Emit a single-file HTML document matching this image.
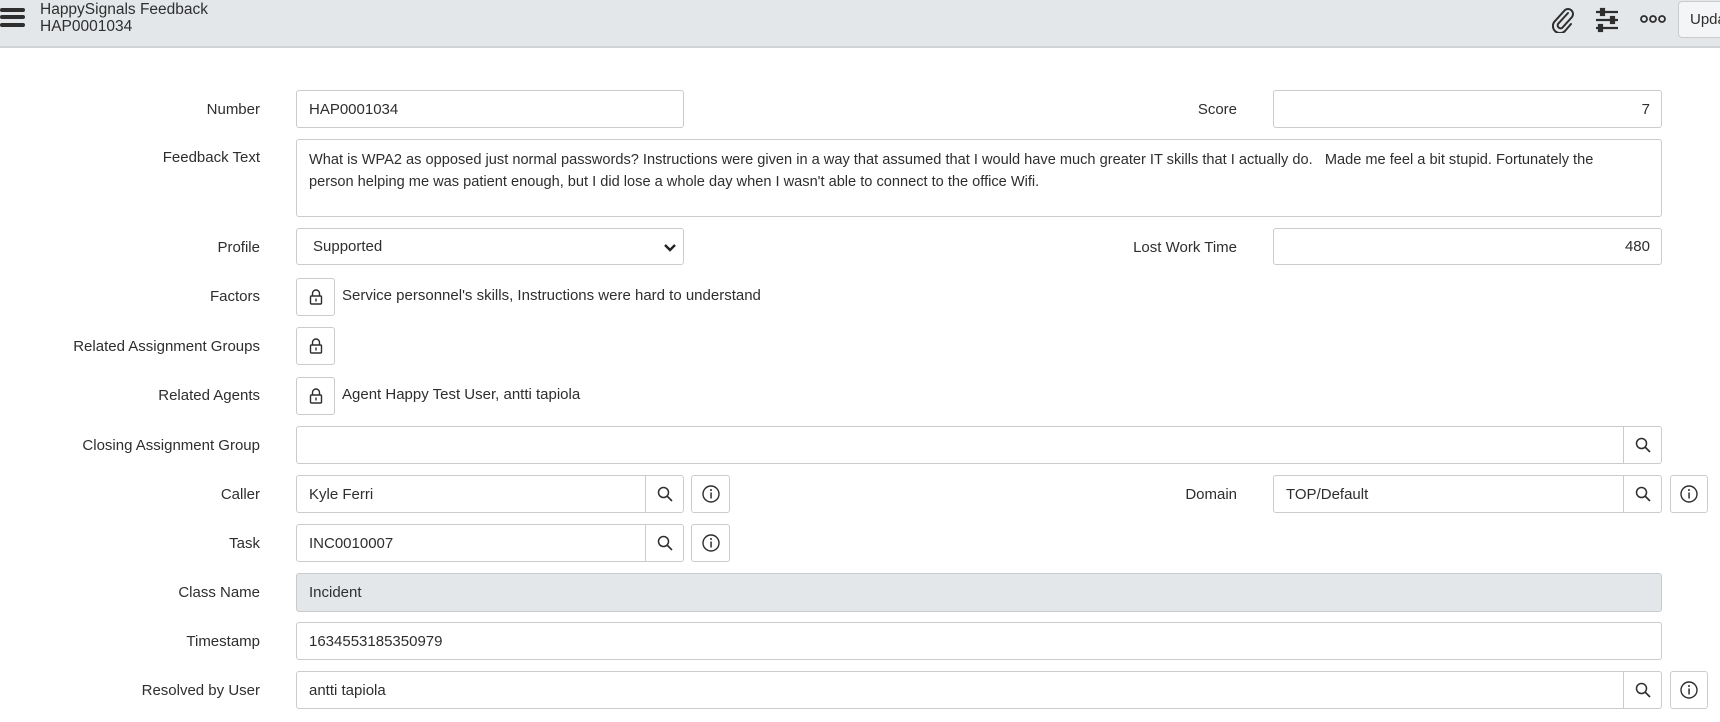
<!DOCTYPE html>
<html><head><meta charset="utf-8">
<style>
*{box-sizing:border-box;margin:0;padding:0}
body{width:1720px;height:722px;background:#fff;font-family:"Liberation Sans",sans-serif;color:#2e2e2e;font-size:15px;position:relative;overflow:hidden}
.hdr{position:absolute;left:0;top:0;width:1720px;height:48px;background:#e4e7ea;border-bottom:2px solid #d0d3d6}
.ham{position:absolute;left:0;width:25px;height:4px;background:#2e2e2e;border-radius:2px}
.t{position:absolute;left:40px;font-size:15.5px;color:#2e2e2e}
.lbl{position:absolute;text-align:right;font-size:15px;line-height:20px}
.box{position:absolute;border:1px solid #c9cbcd;border-radius:3px;background:#fff;font-size:15px;padding-left:12px;display:flex;align-items:center}
.r{justify-content:flex-end;padding-right:11px}
.btn{position:absolute;border:1px solid #c9cbcd;border-radius:3px;background:#fff;display:flex;align-items:center;justify-content:center}
.sep{position:absolute;top:0;bottom:0;border-left:1px solid #c9cbcd;display:flex;align-items:center;justify-content:center}
.txt{position:absolute;left:342px;font-size:15px;line-height:20px}
</style></head><body>
<div class="hdr">
<div class="ham" style="top:8px"></div><div class="ham" style="top:15px"></div><div class="ham" style="top:23px"></div>
<div class="t" style="top:1px">HappySignals Feedback</div>
<div class="t" style="top:18px">HAP0001034</div>
<svg style="position:absolute;left:1550px;top:7px" width="26" height="26" viewBox="0 0 26 26" fill="none" stroke="#2e2e2e" stroke-width="2" stroke-linecap="round"><path d="M18 6 L8 17 a3 3 0 0 0 4 4 L22 10 a5 5 0 0 0 -7 -7 L5 14 a7 7 0 0 0 10 10 L21 17"/></svg>
<svg style="position:absolute;left:1594px;top:7px" width="26" height="26" viewBox="0 0 26 26" stroke="#2e2e2e" stroke-width="2.2"><path d="M2 5H24M2 13H24M2 21H24"/><rect x="7" y="2" width="3" height="6" fill="#2e2e2e"/><rect x="17" y="10" width="3" height="6" fill="#2e2e2e"/><rect x="5" y="18" width="3" height="6" fill="#2e2e2e"/></svg>
<svg style="position:absolute;left:1640px;top:14px" width="26" height="10" viewBox="0 0 26 10" fill="none" stroke="#2e2e2e" stroke-width="1.8"><circle cx="4" cy="5" r="3"/><circle cx="13" cy="5" r="3"/><circle cx="22" cy="5" r="3"/></svg>
<div style="position:absolute;left:1678px;top:1px;width:60px;height:37px;background:#f4f5f6;border:1px solid #c9cbcd;border-radius:4px;padding:9px 0 0 11px;font-size:15px">Update</div>
</div>

<div class="lbl" style="right:1460px;top:100px">Number</div>
<div class="lbl" style="right:483px;top:100px">Score</div>
<div class="lbl" style="right:1460px;top:148px">Feedback Text</div>
<div class="lbl" style="right:1460px;top:238px">Profile</div>
<div class="lbl" style="right:483px;top:238px">Lost Work Time</div>
<div class="lbl" style="right:1460px;top:287px">Factors</div>
<div class="lbl" style="right:1460px;top:337px">Related Assignment Groups</div>
<div class="lbl" style="right:1460px;top:386px">Related Agents</div>
<div class="lbl" style="right:1460px;top:436px">Closing Assignment Group</div>
<div class="lbl" style="right:1460px;top:485px">Caller</div>
<div class="lbl" style="right:483px;top:485px">Domain</div>
<div class="lbl" style="right:1460px;top:534px">Task</div>
<div class="lbl" style="right:1460px;top:583px">Class Name</div>
<div class="lbl" style="right:1460px;top:632px">Timestamp</div>
<div class="lbl" style="right:1460px;top:681px">Resolved by User</div>

<div class="box" style="left:296px;top:90px;width:388px;height:38px">HAP0001034</div>
<div class="box r" style="left:1273px;top:90px;width:389px;height:38px">7</div>
<div class="box" style="left:296px;top:139px;width:1366px;height:78px;align-items:flex-start;padding-top:9px;line-height:22px;font-size:14.6px">What is WPA2 as opposed just normal passwords? Instructions were given in a way that assumed that I would have much greater IT skills that I actually do.&nbsp;&nbsp; Made me feel a bit stupid. Fortunately the<br>person helping me was patient enough, but I did lose a whole day when I wasn't able to connect to the office Wifi.</div>
<div class="box" style="left:296px;top:228px;width:388px;height:37px;padding-left:16px">Supported
<svg style="position:absolute;right:6px;top:14px" width="14" height="10" viewBox="0 0 14 10" fill="none" stroke="#222" stroke-width="2.4"><path d="M2 2L7 7L12 2"/></svg></div>
<div class="box r" style="left:1273px;top:228px;width:389px;height:37px">480</div>

<svg width="0" height="0" style="position:absolute"><defs>
<symbol id="lk" viewBox="0 0 16 18"><path d="M4.5 8V5.5a3.5 3.5 0 0 1 7 0V8" fill="none" stroke="#2e2e2e" stroke-width="1.4"/><rect x="2.5" y="8" width="11" height="8" rx="1" fill="none" stroke="#2e2e2e" stroke-width="1.4"/><rect x="7.3" y="10.5" width="1.4" height="3" fill="#2e2e2e"/></symbol>
<symbol id="sr" viewBox="0 0 18 18"><circle cx="7.5" cy="7.5" r="5" fill="none" stroke="#2e2e2e" stroke-width="1.5"/><path d="M11 11L16 16" stroke="#2e2e2e" stroke-width="1.6"/></symbol>
<symbol id="in" viewBox="0 0 20 20"><circle cx="10" cy="10" r="8" fill="none" stroke="#2e2e2e" stroke-width="1.4"/><rect x="9.3" y="8.5" width="1.5" height="6" fill="#2e2e2e"/><circle cx="10" cy="6" r="1" fill="#2e2e2e"/></symbol>
</defs></svg>

<div class="btn" style="left:296px;top:278px;width:39px;height:38px"><svg width="16" height="18"><use href="#lk"/></svg></div>
<div class="txt" style="top:286px">Service personnel's skills, Instructions were hard to understand</div>
<div class="btn" style="left:296px;top:327px;width:39px;height:38px"><svg width="16" height="18"><use href="#lk"/></svg></div>
<div class="btn" style="left:296px;top:377px;width:39px;height:38px"><svg width="16" height="18"><use href="#lk"/></svg></div>
<div class="txt" style="top:385px">Agent Happy Test User, antti tapiola</div>

<div class="box" style="left:296px;top:426px;width:1366px;height:38px"><div class="sep" style="left:1326px;width:39px"><svg width="18" height="18"><use href="#sr"/></svg></div></div>

<div class="box" style="left:296px;top:475px;width:388px;height:38px">Kyle Ferri<div class="sep" style="left:348px;width:39px"><svg width="18" height="18"><use href="#sr"/></svg></div></div>
<div class="btn" style="left:691px;top:475px;width:39px;height:38px"><svg width="20" height="20"><use href="#in"/></svg></div>
<div class="box" style="left:1273px;top:475px;width:389px;height:38px">TOP/Default<div class="sep" style="left:349px;width:39px"><svg width="18" height="18"><use href="#sr"/></svg></div></div>
<div class="btn" style="left:1670px;top:475px;width:38px;height:38px"><svg width="20" height="20"><use href="#in"/></svg></div>

<div class="box" style="left:296px;top:524px;width:388px;height:38px">INC0010007<div class="sep" style="left:348px;width:39px"><svg width="18" height="18"><use href="#sr"/></svg></div></div>
<div class="btn" style="left:691px;top:524px;width:39px;height:38px"><svg width="20" height="20"><use href="#in"/></svg></div>

<div class="box" style="left:296px;top:573px;width:1366px;height:39px;background:#e4e7ea">Incident</div>
<div class="box" style="left:296px;top:622px;width:1366px;height:38px">1634553185350979</div>
<div class="box" style="left:296px;top:671px;width:1366px;height:38px">antti tapiola<div class="sep" style="left:1326px;width:39px"><svg width="18" height="18"><use href="#sr"/></svg></div></div>
<div class="btn" style="left:1670px;top:671px;width:38px;height:38px"><svg width="20" height="20"><use href="#in"/></svg></div>
</body></html>
